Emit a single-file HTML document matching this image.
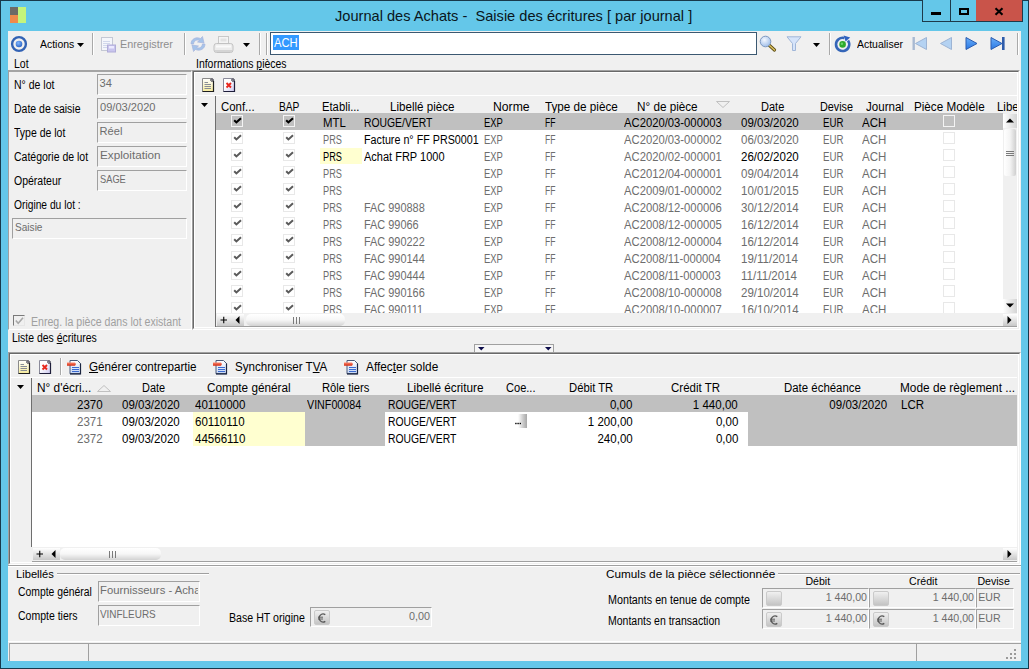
<!DOCTYPE html><html><head><meta charset="utf-8"><title>Journal des Achats</title><style>
*{margin:0;padding:0;box-sizing:border-box}
html,body{width:1029px;height:669px;overflow:hidden}
body{position:relative;background:#64c7e9;font-family:"Liberation Sans",sans-serif}
body>div{position:absolute}
.t{position:absolute;white-space:nowrap;line-height:1.15;font-family:"Liberation Sans",sans-serif}
svg{position:absolute;overflow:visible}
</style></head><body>
<div style="left:0px;top:0px;width:1029px;height:669px;border:1px solid #17394b;background:transparent"></div>
<div style="left:10px;top:7px;width:8px;height:8px;background:#6e6a66"></div>
<div style="left:10px;top:15px;width:8px;height:8px;background:#f08a4b"></div>
<div style="left:18px;top:7px;width:8px;height:16px;background:#c4f47c"></div>
<div class="t" style="left:335.2px;top:8.00px;font-size:14.6px;color:#0a1620;;transform:scaleX(1.0009);transform-origin:left center">Journal des Achats -&nbsp; Saisie des écritures [ par journal ]</div>
<div style="left:922px;top:0px;width:29px;height:22px;border:1px solid #1d3a4a;border-top:none;background:#64c7e9"></div>
<div style="left:950px;top:0px;width:27px;height:22px;border:1px solid #1d3a4a;border-top:none;border-left:none;background:#64c7e9"></div>
<div style="left:950px;top:0px;width:1px;height:22px;background:#1d3a4a"></div>
<div style="left:976px;top:0px;width:47px;height:22px;border:1px solid #1d3a4a;border-top:none;border-left:none;background:#c9544a"></div>
<div style="left:931px;top:12px;width:10px;height:3px;background:#000"></div>
<div style="left:959px;top:8px;width:10px;height:7px;border:2px solid #000"></div>
<svg style="left:994px;top:7px" width="10" height="9" viewBox="0 0 10 9"><path d="M1.5 1.2 L8.5 7.8 M8.5 1.2 L1.5 7.8" stroke="#000" stroke-width="2.1"/></svg>
<div style="left:8px;top:31px;width:1013px;height:630px;background:#f0f0f0"></div>
<svg style="left:10px;top:35px" width="18" height="18" viewBox="0 0 18 18"><defs><radialGradient id="cg" cx="40%" cy="35%" r="70%"><stop offset="0" stop-color="#7fb6ff"/><stop offset="1" stop-color="#2a62c4"/></radialGradient></defs><circle cx="9" cy="9" r="6.9" fill="none" stroke="#3262b4" stroke-width="2.4"/><circle cx="9" cy="9" r="3.3" fill="url(#cg)"/></svg>
<div class="t" style="left:39.7px;top:38.00px;font-size:11.2px;color:#000;;transform:scaleX(0.9339);transform-origin:left center">Actions</div>
<svg style="left:77px;top:43px" width="7" height="4" viewBox="0 0 7 4"><path d="M0 0 H7 L3.5 4 Z" fill="#000"/></svg>
<div style="left:92px;top:33px;width:1px;height:22px;background:#a9a9a9"></div>
<div style="left:93px;top:33px;width:1px;height:22px;background:#ffffff"></div>
<svg style="left:100px;top:36px" width="17" height="17" viewBox="0 0 17 17"><rect x="1.5" y="1.5" width="11" height="13" fill="#f4f6fb" stroke="#c4c8d4"/><path d="M3 5.5h7M3 7.5h7M3 9.5h7M3 11.5h7" stroke="#c8d0e8" stroke-width="0.8"/><rect x="7.5" y="9" width="8" height="7" fill="#c9c5ee" stroke="#b0acd8"/><rect x="9" y="10" width="5" height="2.5" fill="#eceaff"/></svg>
<div class="t" style="left:120px;top:38.00px;font-size:11.2px;color:#8e8e8e;;transform:scaleX(0.9675);transform-origin:left center">Enregistrer</div>
<div style="left:184px;top:33px;width:1px;height:22px;background:#a9a9a9"></div>
<div style="left:185px;top:33px;width:1px;height:22px;background:#ffffff"></div>
<svg style="left:188px;top:35px" width="20" height="18" viewBox="0 0 20 18"><path d="M3 9 C3 4 8 1.5 12.5 3.5 L14.5 1.5 L16 8 L9.5 7 L11.5 5.5 C8.5 4.2 5.8 6 5.5 9 Z" fill="#a6c4ea" stroke="#a8b4dc" stroke-width="0.7"/><path d="M17 9 C17 14 12 16.5 7.5 14.5 L5.5 16.5 L4 10 L10.5 11 L8.5 12.5 C11.5 13.8 14.2 12 14.5 9 Z" fill="#a6c4ea" stroke="#a8b4dc" stroke-width="0.7"/></svg>
<svg style="left:213px;top:35px" width="22" height="19" viewBox="0 0 22 19"><rect x="5.5" y="1.5" width="10" height="8" fill="#f4f4f4" stroke="#c8c8c8"/><rect x="7.5" y="3.5" width="6" height="3" fill="#e2e2e2"/><rect x="1" y="8.5" width="19" height="9" rx="2.5" fill="#ececec" stroke="#c2c2c2"/><rect x="3" y="10.5" width="15" height="2" fill="#fafafa"/><rect x="2" y="15" width="17" height="2" fill="#d4d4d4"/></svg>
<svg style="left:243px;top:43px" width="7" height="4" viewBox="0 0 7 4"><path d="M0 0 H7 L3.5 4 Z" fill="#000"/></svg>
<div style="left:259px;top:33px;width:1px;height:22px;background:#a9a9a9"></div>
<div style="left:260px;top:33px;width:1px;height:22px;background:#ffffff"></div>
<div style="left:266px;top:33px;width:1px;height:22px;background:#a9a9a9"></div>
<div style="left:267px;top:33px;width:1px;height:22px;background:#ffffff"></div>
<div style="left:270px;top:32px;width:487px;height:23px;background:#fff;border:1px solid #3b5871"></div>
<div style="left:273px;top:35px;width:26px;height:15px;background:#3399ff"></div>
<div class="t" style="left:273.6px;top:37.00px;font-size:12px;color:#fff;;transform:scaleX(0.9354);transform-origin:left center">ACH</div>
<svg style="left:759px;top:35px" width="18" height="17" viewBox="0 0 18 17"><defs><radialGradient id="mg" cx="40%" cy="35%" r="60%"><stop offset="0" stop-color="#f4f8ff"/><stop offset="1" stop-color="#a8c4ec"/></radialGradient></defs><path d="M10 10 L15.5 15" stroke="#5a4a10" stroke-width="3.2" stroke-linecap="round"/><path d="M10 10 L15.5 15" stroke="#d9c060" stroke-width="1.6" stroke-linecap="round"/><circle cx="6.5" cy="6.5" r="5.3" fill="url(#mg)" stroke="#7d98c0" stroke-width="1"/></svg>
<svg style="left:786px;top:36px" width="16" height="16" viewBox="0 0 16 16"><path d="M1 0.8 H15 L9.5 7.5 V14.5 H6.5 V7.5 Z" fill="#d6e4fa" stroke="#a0b6d8" stroke-width="1"/></svg>
<svg style="left:813px;top:43px" width="7" height="4" viewBox="0 0 7 4"><path d="M0 0 H7 L3.5 4 Z" fill="#000"/></svg>
<div style="left:829px;top:33px;width:1px;height:22px;background:#a9a9a9"></div>
<div style="left:830px;top:33px;width:1px;height:22px;background:#ffffff"></div>
<svg style="left:834px;top:35px" width="18" height="18" viewBox="0 0 18 18"><path d="M10.31 3.03 A6.6 6.6 0 1 0 14.01 5.61" fill="none" stroke="#3566b8" stroke-width="2.6"/><path d="M9.6 0.6 L16.2 2.4 L11.6 6.6 Z" fill="#2f62c0"/><circle cx="8.6" cy="9.4" r="3.3" fill="#2faa2a"/><circle cx="7.9" cy="8.7" r="1.2" fill="#6ad46a"/></svg>
<div class="t" style="left:857px;top:38.00px;font-size:11.2px;color:#000;;transform:scaleX(0.9354);transform-origin:left center">Actualiser</div>
<svg style="left:912px;top:37px" width="16" height="14" viewBox="0 0 16 14"><rect x="0.5" y="0" width="2.4" height="13" fill="#a9bad2"/><path d="M14.5 0.5 V12.5 L3.5 6.5 Z" fill="#b4d2f2" stroke="#9db4d4" stroke-width="1"/></svg>
<svg style="left:939px;top:37px" width="14" height="14" viewBox="0 0 14 14"><path d="M12.5 0.5 V12.5 L1.5 6.5 Z" fill="#b4d2f2" stroke="#9db4d4" stroke-width="1"/></svg>
<svg style="left:965px;top:37px" width="14" height="14" viewBox="0 0 14 14"><defs><linearGradient id="bg1" x1="0" y1="0" x2="0" y2="1"><stop offset="0" stop-color="#6aaef8"/><stop offset="1" stop-color="#2a78e4"/></linearGradient></defs><path d="M1 0.5 V12.5 L12 6.5 Z" fill="url(#bg1)" stroke="#2a5cb0" stroke-width="1"/></svg>
<svg style="left:990px;top:37px" width="16" height="14" viewBox="0 0 16 14"><path d="M1 0.5 V12.5 L12 6.5 Z" fill="url(#bg1)" stroke="#2a5cb0" stroke-width="1"/><rect x="12" y="0" width="2.6" height="13" fill="#2f5caa"/></svg>
<div style="left:1017px;top:33px;width:1px;height:22px;background:#a9a9a9"></div>
<div style="left:1018px;top:33px;width:1px;height:22px;background:#ffffff"></div>
<div class="t" style="left:14.3px;top:58.00px;font-size:12px;color:#000;;transform:scaleX(0.8750);transform-origin:left center">Lot</div>
<div style="left:8px;top:70px;width:184px;height:260px;border-top:2px solid #a4a4a4;border-left:1px solid #a0a0a0;border-bottom:1px solid #fff;border-right:1px solid #fff;background:#f0f0f0"></div>
<div class="t" style="left:13.9px;top:79.00px;font-size:12px;color:#000;;transform:scaleX(0.8750);transform-origin:left center">N° de lot</div>
<div style="left:97px;top:74px;width:90px;height:21px;border-top:1px solid #a0a0a0;border-left:1px solid #a0a0a0;border-bottom:1px solid #fff;border-right:1px solid #fff"></div>
<div class="t" style="left:99.6px;top:77.00px;font-size:11.1px;color:#6d6d6d;">34</div>
<div class="t" style="left:13.9px;top:103.00px;font-size:12px;color:#000;;transform:scaleX(0.8750);transform-origin:left center">Date de saisie</div>
<div style="left:97px;top:98px;width:90px;height:21px;border-top:1px solid #a0a0a0;border-left:1px solid #a0a0a0;border-bottom:1px solid #fff;border-right:1px solid #fff"></div>
<div class="t" style="left:99.6px;top:101.00px;font-size:11.1px;color:#6d6d6d;;transform:scaleX(0.9990);transform-origin:left center">09/03/2020</div>
<div class="t" style="left:13.9px;top:127.00px;font-size:12px;color:#000;;transform:scaleX(0.8750);transform-origin:left center">Type de lot</div>
<div style="left:97px;top:122px;width:90px;height:21px;border-top:1px solid #a0a0a0;border-left:1px solid #a0a0a0;border-bottom:1px solid #fff;border-right:1px solid #fff"></div>
<div class="t" style="left:99.6px;top:125.00px;font-size:11.1px;color:#6d6d6d;">Réel</div>
<div class="t" style="left:13.9px;top:151.00px;font-size:12px;color:#000;;transform:scaleX(0.8750);transform-origin:left center">Catégorie de lot</div>
<div style="left:97px;top:146px;width:90px;height:21px;border-top:1px solid #a0a0a0;border-left:1px solid #a0a0a0;border-bottom:1px solid #fff;border-right:1px solid #fff"></div>
<div class="t" style="left:99.6px;top:149.00px;font-size:11.1px;color:#6d6d6d;;transform:scaleX(1.0560);transform-origin:left center">Exploitation</div>
<div class="t" style="left:13.9px;top:175.00px;font-size:12px;color:#000;;transform:scaleX(0.8750);transform-origin:left center">Opérateur</div>
<div style="left:97px;top:170px;width:90px;height:21px;border-top:1px solid #a0a0a0;border-left:1px solid #a0a0a0;border-bottom:1px solid #fff;border-right:1px solid #fff"></div>
<div class="t" style="left:99.6px;top:173.00px;font-size:11.1px;color:#6d6d6d;;transform:scaleX(0.8364);transform-origin:left center">SAGE</div>
<div class="t" style="left:13.7px;top:199.00px;font-size:12px;color:#000;;transform:scaleX(0.8547);transform-origin:left center">Origine du lot :</div>
<div style="left:12px;top:218px;width:175px;height:21px;border-top:1px solid #a0a0a0;border-left:1px solid #a0a0a0;border-bottom:1px solid #fff;border-right:1px solid #fff"></div>
<div class="t" style="left:14.8px;top:221.00px;font-size:11.1px;color:#6d6d6d;;transform:scaleX(0.9096);transform-origin:left center">Saisie</div>
<div style="left:13px;top:315px;width:12px;height:11px;border-top:1px solid #7a7a7a;border-left:1px solid #7a7a7a;border-bottom:1px solid #e6e6e6;border-right:1px solid #e6e6e6"></div>
<svg style="left:15px;top:317px" width="9" height="8" viewBox="0 0 9 8"><path d="M0.8 3.5 L3.2 6.2 L8 0.8" fill="none" stroke="#a8a8a8" stroke-width="1.6"/></svg>
<div class="t" style="left:30.6px;top:316.00px;font-size:12px;color:#a0a0a0;;transform:scaleX(0.8818);transform-origin:left center">Enreg. la pièce dans lot existant</div>
<div class="t" style="left:195.6px;top:58.00px;font-size:12px;color:#000;;transform:scaleX(0.8697);transform-origin:left center">Informations <u>p</u>ièces</div>
<div style="left:192px;top:70px;width:828px;height:260px;border-top:1px solid #a0a0a0;border-left:1px solid #a0a0a0;border-right:1px solid #fff;border-bottom:1px solid #fff"></div>
<div style="left:193px;top:71px;width:826px;height:258px;border-top:1px solid #696969;border-left:1px solid #696969;border-right:1px solid #f0f0f0;border-bottom:1px solid #f0f0f0"></div>
<div style="left:194px;top:72px;width:824px;height:256px;border:1px solid #fff;background:#f0f0f0"></div>
<svg style="left:202px;top:78px" width="12" height="14" viewBox="0 0 12 14"><defs><linearGradient id="dn" x1="0" y1="0" x2="0" y2="1"><stop offset="0" stop-color="#ffffff"/><stop offset="1" stop-color="#f7ec9c"/></linearGradient></defs><path d="M0.5 0.5 H9 L11.5 3 V13.5 H0.5 Z" fill="url(#dn)" stroke="#8a8a8a" stroke-width="1"/><path d="M11.5 3 V13.5 H0.5" fill="none" stroke="#1e1e1e" stroke-width="1.2"/><circle cx="10" cy="2" r="1.3" fill="none" stroke="#2a2a3a" stroke-width="0.9"/><path d="M2.5 4.5 H6 M2.5 6.5 H9 M2.5 8.5 H9 M2.5 10.5 H9" stroke="#7a8090" stroke-width="0.9"/></svg>
<svg style="left:223px;top:78px" width="12" height="14" viewBox="0 0 12 14"><defs><linearGradient id="dd" x1="0" y1="0" x2="1" y2="1"><stop offset="0.4" stop-color="#ffffff"/><stop offset="1" stop-color="#c8c4ee"/></linearGradient></defs><path d="M0.5 0.5 H9 L11.5 3 V13.5 H0.5 Z" fill="url(#dd)" stroke="#8a8a9a" stroke-width="1"/><path d="M11.5 3 V13.5 H0.5" fill="none" stroke="#1e1e3a" stroke-width="1.2"/><circle cx="10" cy="2" r="1.3" fill="none" stroke="#2a2a3a" stroke-width="0.9"/><path d="M3.5 5 L8 9.5 M8 5 L3.5 9.5" stroke="#e8281e" stroke-width="1.9"/></svg>
<div style="left:195px;top:95px;width:822px;height:1px;background:#fff"></div>
<div style="left:215px;top:96px;width:1px;height:231px;background:#6e6e6e"></div>
<svg style="left:201px;top:103px" width="7" height="4" viewBox="0 0 7 4"><path d="M0 0 H7 L3.5 4 Z" fill="#000"/></svg>
<div class="t" style="left:220.7px;top:101.00px;font-size:12px;color:#000;;transform:scaleX(0.9505);transform-origin:left center">Conf...</div>
<div class="t" style="left:278.6px;top:101.00px;font-size:12px;color:#000;;transform:scaleX(0.8495);transform-origin:left center">BAP</div>
<div class="t" style="left:322.3px;top:101.00px;font-size:12px;color:#000;;transform:scaleX(0.9370);transform-origin:left center">Etabli...</div>
<div class="t" style="left:389.6px;top:101.00px;font-size:12px;color:#000;;transform:scaleX(0.9668);transform-origin:left center">Libellé pièce</div>
<div class="t" style="left:493.4px;top:101.00px;font-size:12px;color:#000;;transform:scaleX(1.0165);transform-origin:left center">Norme</div>
<div class="t" style="left:544.9px;top:101.00px;font-size:12px;color:#000;;transform:scaleX(0.9743);transform-origin:left center">Type de pièce</div>
<div class="t" style="left:637.2px;top:101.00px;font-size:12px;color:#000;;transform:scaleX(0.9748);transform-origin:left center">N° de pièce</div>
<div class="t" style="left:760.7px;top:101.00px;font-size:12px;color:#000;;transform:scaleX(0.9192);transform-origin:left center">Date</div>
<div class="t" style="left:819.8px;top:101.00px;font-size:12px;color:#000;;transform:scaleX(0.8997);transform-origin:left center">Devise</div>
<div class="t" style="left:865.7px;top:101.00px;font-size:12px;color:#000;;transform:scaleX(0.9629);transform-origin:left center">Journal</div>
<div class="t" style="left:914.3px;top:101.00px;font-size:12px;color:#000;;transform:scaleX(0.9723);transform-origin:left center">Pièce Modèle</div>
<div style="left:990px;top:96px;width:27px;height:17px;overflow:hidden"><div class="t" style="left:6.6px;top:5px;font-size:12px;color:#000;transform:scaleX(0.955);transform-origin:left center">Libellé</div></div>
<svg style="left:716px;top:101px" width="14" height="7" viewBox="0 0 14 7"><path d="M0.5 0.5 H13.5 L7 6.5 Z" fill="none" stroke="#c0c0c0" stroke-width="1"/></svg>
<div style="left:216px;top:113px;width:787px;height:200px;background:#fff;overflow:hidden"></div>
<div style="left:216px;top:113px;width:787px;height:200px;overflow:hidden;background:#fff"><div style="position:absolute;left:0px;top:0px;width:787px;height:17px;background:#c0c0c0"></div><div style="position:absolute;left:15px;top:2px;width:12px;height:12px;border:1px solid #f4f4f4;background:#c0c0c0"></div><svg style="left:17px;top:4px" width="9" height="7"><path d="M1.2 3.3 L3.4 5.4 L8 1.3" fill="none" stroke="#000" stroke-width="2.1"/></svg><div style="position:absolute;left:67px;top:2px;width:12px;height:12px;border:1px solid #f4f4f4;background:#c0c0c0"></div><svg style="left:69px;top:4px" width="9" height="7"><path d="M1.2 3.3 L3.4 5.4 L8 1.3" fill="none" stroke="#000" stroke-width="2.1"/></svg><div style="position:absolute;left:727px;top:2px;width:12px;height:12px;border:1px solid #f4f4f4"></div><div class="t" style="left:107.30000000000001px;top:4.00px;font-size:12px;color:#000;transform:scaleX(0.9500);transform-origin:left center">MTL</div><div class="t" style="left:148.3px;top:4.00px;font-size:12px;color:#000;transform:scaleX(0.8644);transform-origin:left center">ROUGE/VERT</div><div class="t" style="left:268.3px;top:4.00px;font-size:12px;color:#000;transform:scaleX(0.7871);transform-origin:left center">EXP</div><div class="t" style="left:328.5px;top:4.00px;font-size:12px;color:#000;transform:scaleX(0.7162);transform-origin:left center">FF</div><div class="t" style="left:408px;top:4.00px;font-size:12px;color:#000;transform:scaleX(0.9386);transform-origin:left center">AC2020/03-000003</div><div class="t" style="left:525.3px;top:4.00px;font-size:12px;color:#000;transform:scaleX(0.9607);transform-origin:left center">09/03/2020</div><div class="t" style="left:607.3px;top:4.00px;font-size:12px;color:#000;transform:scaleX(0.8052);transform-origin:left center">EUR</div><div class="t" style="left:646.2px;top:4.00px;font-size:12px;color:#000;transform:scaleX(0.9591);transform-origin:left center">ACH</div><div style="position:absolute;left:15px;top:19px;width:12px;height:12px;border:1px solid #e8e8e8"></div><svg style="left:17px;top:21px" width="9" height="7"><path d="M1.2 3.3 L3.4 5.4 L8 1.3" fill="none" stroke="#5a5a5a" stroke-width="2"/></svg><div style="position:absolute;left:67px;top:19px;width:12px;height:12px;border:1px solid #e8e8e8"></div><svg style="left:69px;top:21px" width="9" height="7"><path d="M1.2 3.3 L3.4 5.4 L8 1.3" fill="none" stroke="#5a5a5a" stroke-width="2"/></svg><div style="position:absolute;left:727px;top:19px;width:12px;height:12px;border:1px solid #e8e8e8"></div><div class="t" style="left:107.30000000000001px;top:21.00px;font-size:12px;color:#6d6d6d;transform:scaleX(0.7660);transform-origin:left center">PRS</div><div class="t" style="left:148.3px;top:21.00px;font-size:12px;color:#000;transform:scaleX(0.8948);transform-origin:left center">Facture n° FF PRS0001</div><div class="t" style="left:268.3px;top:21.00px;font-size:12px;color:#6d6d6d;transform:scaleX(0.7871);transform-origin:left center">EXP</div><div class="t" style="left:328.5px;top:21.00px;font-size:12px;color:#6d6d6d;transform:scaleX(0.7162);transform-origin:left center">FF</div><div class="t" style="left:408px;top:21.00px;font-size:12px;color:#6d6d6d;transform:scaleX(0.9386);transform-origin:left center">AC2020/03-000002</div><div class="t" style="left:525.3px;top:21.00px;font-size:12px;color:#6d6d6d;transform:scaleX(0.9607);transform-origin:left center">06/03/2020</div><div class="t" style="left:607.3px;top:21.00px;font-size:12px;color:#6d6d6d;transform:scaleX(0.8052);transform-origin:left center">EUR</div><div class="t" style="left:646.2px;top:21.00px;font-size:12px;color:#6d6d6d;transform:scaleX(0.9591);transform-origin:left center">ACH</div><div style="position:absolute;left:104px;top:35px;width:42px;height:16px;background:#ffffd0"></div><div style="position:absolute;left:15px;top:36px;width:12px;height:12px;border:1px solid #e8e8e8"></div><svg style="left:17px;top:38px" width="9" height="7"><path d="M1.2 3.3 L3.4 5.4 L8 1.3" fill="none" stroke="#5a5a5a" stroke-width="2"/></svg><div style="position:absolute;left:67px;top:36px;width:12px;height:12px;border:1px solid #e8e8e8"></div><svg style="left:69px;top:38px" width="9" height="7"><path d="M1.2 3.3 L3.4 5.4 L8 1.3" fill="none" stroke="#5a5a5a" stroke-width="2"/></svg><div style="position:absolute;left:727px;top:36px;width:12px;height:12px;border:1px solid #e8e8e8"></div><div class="t" style="left:107.30000000000001px;top:38.00px;font-size:12px;color:#000;transform:scaleX(0.7660);transform-origin:left center">PRS</div><div class="t" style="left:148.3px;top:38.00px;font-size:12px;color:#000;transform:scaleX(0.9165);transform-origin:left center">Achat FRP 1000</div><div class="t" style="left:268.3px;top:38.00px;font-size:12px;color:#6d6d6d;transform:scaleX(0.7871);transform-origin:left center">EXP</div><div class="t" style="left:328.5px;top:38.00px;font-size:12px;color:#6d6d6d;transform:scaleX(0.7162);transform-origin:left center">FF</div><div class="t" style="left:408px;top:38.00px;font-size:12px;color:#6d6d6d;transform:scaleX(0.9386);transform-origin:left center">AC2020/02-000001</div><div class="t" style="left:525.3px;top:38.00px;font-size:12px;color:#000;transform:scaleX(0.9607);transform-origin:left center">26/02/2020</div><div class="t" style="left:607.3px;top:38.00px;font-size:12px;color:#6d6d6d;transform:scaleX(0.8052);transform-origin:left center">EUR</div><div class="t" style="left:646.2px;top:38.00px;font-size:12px;color:#6d6d6d;transform:scaleX(0.9591);transform-origin:left center">ACH</div><div style="position:absolute;left:15px;top:53px;width:12px;height:12px;border:1px solid #e8e8e8"></div><svg style="left:17px;top:55px" width="9" height="7"><path d="M1.2 3.3 L3.4 5.4 L8 1.3" fill="none" stroke="#5a5a5a" stroke-width="2"/></svg><div style="position:absolute;left:67px;top:53px;width:12px;height:12px;border:1px solid #e8e8e8"></div><svg style="left:69px;top:55px" width="9" height="7"><path d="M1.2 3.3 L3.4 5.4 L8 1.3" fill="none" stroke="#5a5a5a" stroke-width="2"/></svg><div style="position:absolute;left:727px;top:53px;width:12px;height:12px;border:1px solid #e8e8e8"></div><div class="t" style="left:107.30000000000001px;top:55.00px;font-size:12px;color:#6d6d6d;transform:scaleX(0.7660);transform-origin:left center">PRS</div><div class="t" style="left:268.3px;top:55.00px;font-size:12px;color:#6d6d6d;transform:scaleX(0.7871);transform-origin:left center">EXP</div><div class="t" style="left:328.5px;top:55.00px;font-size:12px;color:#6d6d6d;transform:scaleX(0.7162);transform-origin:left center">FF</div><div class="t" style="left:408px;top:55.00px;font-size:12px;color:#6d6d6d;transform:scaleX(0.9386);transform-origin:left center">AC2012/04-000001</div><div class="t" style="left:525.3px;top:55.00px;font-size:12px;color:#6d6d6d;transform:scaleX(0.9607);transform-origin:left center">09/04/2014</div><div class="t" style="left:607.3px;top:55.00px;font-size:12px;color:#6d6d6d;transform:scaleX(0.8052);transform-origin:left center">EUR</div><div class="t" style="left:646.2px;top:55.00px;font-size:12px;color:#6d6d6d;transform:scaleX(0.9591);transform-origin:left center">ACH</div><div style="position:absolute;left:15px;top:70px;width:12px;height:12px;border:1px solid #e8e8e8"></div><svg style="left:17px;top:72px" width="9" height="7"><path d="M1.2 3.3 L3.4 5.4 L8 1.3" fill="none" stroke="#5a5a5a" stroke-width="2"/></svg><div style="position:absolute;left:67px;top:70px;width:12px;height:12px;border:1px solid #e8e8e8"></div><svg style="left:69px;top:72px" width="9" height="7"><path d="M1.2 3.3 L3.4 5.4 L8 1.3" fill="none" stroke="#5a5a5a" stroke-width="2"/></svg><div style="position:absolute;left:727px;top:70px;width:12px;height:12px;border:1px solid #e8e8e8"></div><div class="t" style="left:107.30000000000001px;top:72.00px;font-size:12px;color:#6d6d6d;transform:scaleX(0.7660);transform-origin:left center">PRS</div><div class="t" style="left:268.3px;top:72.00px;font-size:12px;color:#6d6d6d;transform:scaleX(0.7871);transform-origin:left center">EXP</div><div class="t" style="left:328.5px;top:72.00px;font-size:12px;color:#6d6d6d;transform:scaleX(0.7162);transform-origin:left center">FF</div><div class="t" style="left:408px;top:72.00px;font-size:12px;color:#6d6d6d;transform:scaleX(0.9386);transform-origin:left center">AC2009/01-000002</div><div class="t" style="left:525.3px;top:72.00px;font-size:12px;color:#6d6d6d;transform:scaleX(0.9607);transform-origin:left center">10/01/2015</div><div class="t" style="left:607.3px;top:72.00px;font-size:12px;color:#6d6d6d;transform:scaleX(0.8052);transform-origin:left center">EUR</div><div class="t" style="left:646.2px;top:72.00px;font-size:12px;color:#6d6d6d;transform:scaleX(0.9591);transform-origin:left center">ACH</div><div style="position:absolute;left:15px;top:87px;width:12px;height:12px;border:1px solid #e8e8e8"></div><svg style="left:17px;top:89px" width="9" height="7"><path d="M1.2 3.3 L3.4 5.4 L8 1.3" fill="none" stroke="#5a5a5a" stroke-width="2"/></svg><div style="position:absolute;left:67px;top:87px;width:12px;height:12px;border:1px solid #e8e8e8"></div><svg style="left:69px;top:89px" width="9" height="7"><path d="M1.2 3.3 L3.4 5.4 L8 1.3" fill="none" stroke="#5a5a5a" stroke-width="2"/></svg><div style="position:absolute;left:727px;top:87px;width:12px;height:12px;border:1px solid #e8e8e8"></div><div class="t" style="left:107.30000000000001px;top:89.00px;font-size:12px;color:#6d6d6d;transform:scaleX(0.7660);transform-origin:left center">PRS</div><div class="t" style="left:148.3px;top:89.00px;font-size:12px;color:#6d6d6d;transform:scaleX(0.9100);transform-origin:left center">FAC 990888</div><div class="t" style="left:268.3px;top:89.00px;font-size:12px;color:#6d6d6d;transform:scaleX(0.7871);transform-origin:left center">EXP</div><div class="t" style="left:328.5px;top:89.00px;font-size:12px;color:#6d6d6d;transform:scaleX(0.7162);transform-origin:left center">FF</div><div class="t" style="left:408px;top:89.00px;font-size:12px;color:#6d6d6d;transform:scaleX(0.9386);transform-origin:left center">AC2008/12-000006</div><div class="t" style="left:525.3px;top:89.00px;font-size:12px;color:#6d6d6d;transform:scaleX(0.9607);transform-origin:left center">30/12/2014</div><div class="t" style="left:607.3px;top:89.00px;font-size:12px;color:#6d6d6d;transform:scaleX(0.8052);transform-origin:left center">EUR</div><div class="t" style="left:646.2px;top:89.00px;font-size:12px;color:#6d6d6d;transform:scaleX(0.9591);transform-origin:left center">ACH</div><div style="position:absolute;left:15px;top:104px;width:12px;height:12px;border:1px solid #e8e8e8"></div><svg style="left:17px;top:106px" width="9" height="7"><path d="M1.2 3.3 L3.4 5.4 L8 1.3" fill="none" stroke="#5a5a5a" stroke-width="2"/></svg><div style="position:absolute;left:67px;top:104px;width:12px;height:12px;border:1px solid #e8e8e8"></div><svg style="left:69px;top:106px" width="9" height="7"><path d="M1.2 3.3 L3.4 5.4 L8 1.3" fill="none" stroke="#5a5a5a" stroke-width="2"/></svg><div style="position:absolute;left:727px;top:104px;width:12px;height:12px;border:1px solid #e8e8e8"></div><div class="t" style="left:107.30000000000001px;top:106.00px;font-size:12px;color:#6d6d6d;transform:scaleX(0.7660);transform-origin:left center">PRS</div><div class="t" style="left:148.3px;top:106.00px;font-size:12px;color:#6d6d6d;transform:scaleX(0.9100);transform-origin:left center">FAC 99066</div><div class="t" style="left:268.3px;top:106.00px;font-size:12px;color:#6d6d6d;transform:scaleX(0.7871);transform-origin:left center">EXP</div><div class="t" style="left:328.5px;top:106.00px;font-size:12px;color:#6d6d6d;transform:scaleX(0.7162);transform-origin:left center">FF</div><div class="t" style="left:408px;top:106.00px;font-size:12px;color:#6d6d6d;transform:scaleX(0.9386);transform-origin:left center">AC2008/12-000005</div><div class="t" style="left:525.3px;top:106.00px;font-size:12px;color:#6d6d6d;transform:scaleX(0.9607);transform-origin:left center">16/12/2014</div><div class="t" style="left:607.3px;top:106.00px;font-size:12px;color:#6d6d6d;transform:scaleX(0.8052);transform-origin:left center">EUR</div><div class="t" style="left:646.2px;top:106.00px;font-size:12px;color:#6d6d6d;transform:scaleX(0.9591);transform-origin:left center">ACH</div><div style="position:absolute;left:15px;top:121px;width:12px;height:12px;border:1px solid #e8e8e8"></div><svg style="left:17px;top:123px" width="9" height="7"><path d="M1.2 3.3 L3.4 5.4 L8 1.3" fill="none" stroke="#5a5a5a" stroke-width="2"/></svg><div style="position:absolute;left:67px;top:121px;width:12px;height:12px;border:1px solid #e8e8e8"></div><svg style="left:69px;top:123px" width="9" height="7"><path d="M1.2 3.3 L3.4 5.4 L8 1.3" fill="none" stroke="#5a5a5a" stroke-width="2"/></svg><div style="position:absolute;left:727px;top:121px;width:12px;height:12px;border:1px solid #e8e8e8"></div><div class="t" style="left:107.30000000000001px;top:123.00px;font-size:12px;color:#6d6d6d;transform:scaleX(0.7660);transform-origin:left center">PRS</div><div class="t" style="left:148.3px;top:123.00px;font-size:12px;color:#6d6d6d;transform:scaleX(0.9100);transform-origin:left center">FAC 990222</div><div class="t" style="left:268.3px;top:123.00px;font-size:12px;color:#6d6d6d;transform:scaleX(0.7871);transform-origin:left center">EXP</div><div class="t" style="left:328.5px;top:123.00px;font-size:12px;color:#6d6d6d;transform:scaleX(0.7162);transform-origin:left center">FF</div><div class="t" style="left:408px;top:123.00px;font-size:12px;color:#6d6d6d;transform:scaleX(0.9386);transform-origin:left center">AC2008/12-000004</div><div class="t" style="left:525.3px;top:123.00px;font-size:12px;color:#6d6d6d;transform:scaleX(0.9607);transform-origin:left center">16/12/2014</div><div class="t" style="left:607.3px;top:123.00px;font-size:12px;color:#6d6d6d;transform:scaleX(0.8052);transform-origin:left center">EUR</div><div class="t" style="left:646.2px;top:123.00px;font-size:12px;color:#6d6d6d;transform:scaleX(0.9591);transform-origin:left center">ACH</div><div style="position:absolute;left:15px;top:138px;width:12px;height:12px;border:1px solid #e8e8e8"></div><svg style="left:17px;top:140px" width="9" height="7"><path d="M1.2 3.3 L3.4 5.4 L8 1.3" fill="none" stroke="#5a5a5a" stroke-width="2"/></svg><div style="position:absolute;left:67px;top:138px;width:12px;height:12px;border:1px solid #e8e8e8"></div><svg style="left:69px;top:140px" width="9" height="7"><path d="M1.2 3.3 L3.4 5.4 L8 1.3" fill="none" stroke="#5a5a5a" stroke-width="2"/></svg><div style="position:absolute;left:727px;top:138px;width:12px;height:12px;border:1px solid #e8e8e8"></div><div class="t" style="left:107.30000000000001px;top:140.00px;font-size:12px;color:#6d6d6d;transform:scaleX(0.7660);transform-origin:left center">PRS</div><div class="t" style="left:148.3px;top:140.00px;font-size:12px;color:#6d6d6d;transform:scaleX(0.9100);transform-origin:left center">FAC 990144</div><div class="t" style="left:268.3px;top:140.00px;font-size:12px;color:#6d6d6d;transform:scaleX(0.7871);transform-origin:left center">EXP</div><div class="t" style="left:328.5px;top:140.00px;font-size:12px;color:#6d6d6d;transform:scaleX(0.7162);transform-origin:left center">FF</div><div class="t" style="left:408px;top:140.00px;font-size:12px;color:#6d6d6d;transform:scaleX(0.9386);transform-origin:left center">AC2008/11-000004</div><div class="t" style="left:525.3px;top:140.00px;font-size:12px;color:#6d6d6d;transform:scaleX(0.9607);transform-origin:left center">19/11/2014</div><div class="t" style="left:607.3px;top:140.00px;font-size:12px;color:#6d6d6d;transform:scaleX(0.8052);transform-origin:left center">EUR</div><div class="t" style="left:646.2px;top:140.00px;font-size:12px;color:#6d6d6d;transform:scaleX(0.9591);transform-origin:left center">ACH</div><div style="position:absolute;left:15px;top:155px;width:12px;height:12px;border:1px solid #e8e8e8"></div><svg style="left:17px;top:157px" width="9" height="7"><path d="M1.2 3.3 L3.4 5.4 L8 1.3" fill="none" stroke="#5a5a5a" stroke-width="2"/></svg><div style="position:absolute;left:67px;top:155px;width:12px;height:12px;border:1px solid #e8e8e8"></div><svg style="left:69px;top:157px" width="9" height="7"><path d="M1.2 3.3 L3.4 5.4 L8 1.3" fill="none" stroke="#5a5a5a" stroke-width="2"/></svg><div style="position:absolute;left:727px;top:155px;width:12px;height:12px;border:1px solid #e8e8e8"></div><div class="t" style="left:107.30000000000001px;top:157.00px;font-size:12px;color:#6d6d6d;transform:scaleX(0.7660);transform-origin:left center">PRS</div><div class="t" style="left:148.3px;top:157.00px;font-size:12px;color:#6d6d6d;transform:scaleX(0.9100);transform-origin:left center">FAC 990444</div><div class="t" style="left:268.3px;top:157.00px;font-size:12px;color:#6d6d6d;transform:scaleX(0.7871);transform-origin:left center">EXP</div><div class="t" style="left:328.5px;top:157.00px;font-size:12px;color:#6d6d6d;transform:scaleX(0.7162);transform-origin:left center">FF</div><div class="t" style="left:408px;top:157.00px;font-size:12px;color:#6d6d6d;transform:scaleX(0.9386);transform-origin:left center">AC2008/11-000003</div><div class="t" style="left:525.3px;top:157.00px;font-size:12px;color:#6d6d6d;transform:scaleX(0.9607);transform-origin:left center">11/11/2014</div><div class="t" style="left:607.3px;top:157.00px;font-size:12px;color:#6d6d6d;transform:scaleX(0.8052);transform-origin:left center">EUR</div><div class="t" style="left:646.2px;top:157.00px;font-size:12px;color:#6d6d6d;transform:scaleX(0.9591);transform-origin:left center">ACH</div><div style="position:absolute;left:15px;top:172px;width:12px;height:12px;border:1px solid #e8e8e8"></div><svg style="left:17px;top:174px" width="9" height="7"><path d="M1.2 3.3 L3.4 5.4 L8 1.3" fill="none" stroke="#5a5a5a" stroke-width="2"/></svg><div style="position:absolute;left:67px;top:172px;width:12px;height:12px;border:1px solid #e8e8e8"></div><svg style="left:69px;top:174px" width="9" height="7"><path d="M1.2 3.3 L3.4 5.4 L8 1.3" fill="none" stroke="#5a5a5a" stroke-width="2"/></svg><div style="position:absolute;left:727px;top:172px;width:12px;height:12px;border:1px solid #e8e8e8"></div><div class="t" style="left:107.30000000000001px;top:174.00px;font-size:12px;color:#6d6d6d;transform:scaleX(0.7660);transform-origin:left center">PRS</div><div class="t" style="left:148.3px;top:174.00px;font-size:12px;color:#6d6d6d;transform:scaleX(0.9100);transform-origin:left center">FAC 990166</div><div class="t" style="left:268.3px;top:174.00px;font-size:12px;color:#6d6d6d;transform:scaleX(0.7871);transform-origin:left center">EXP</div><div class="t" style="left:328.5px;top:174.00px;font-size:12px;color:#6d6d6d;transform:scaleX(0.7162);transform-origin:left center">FF</div><div class="t" style="left:408px;top:174.00px;font-size:12px;color:#6d6d6d;transform:scaleX(0.9386);transform-origin:left center">AC2008/10-000008</div><div class="t" style="left:525.3px;top:174.00px;font-size:12px;color:#6d6d6d;transform:scaleX(0.9607);transform-origin:left center">29/10/2014</div><div class="t" style="left:607.3px;top:174.00px;font-size:12px;color:#6d6d6d;transform:scaleX(0.8052);transform-origin:left center">EUR</div><div class="t" style="left:646.2px;top:174.00px;font-size:12px;color:#6d6d6d;transform:scaleX(0.9591);transform-origin:left center">ACH</div><div style="position:absolute;left:15px;top:189px;width:12px;height:12px;border:1px solid #e8e8e8"></div><svg style="left:17px;top:191px" width="9" height="7"><path d="M1.2 3.3 L3.4 5.4 L8 1.3" fill="none" stroke="#5a5a5a" stroke-width="2"/></svg><div style="position:absolute;left:67px;top:189px;width:12px;height:12px;border:1px solid #e8e8e8"></div><svg style="left:69px;top:191px" width="9" height="7"><path d="M1.2 3.3 L3.4 5.4 L8 1.3" fill="none" stroke="#5a5a5a" stroke-width="2"/></svg><div style="position:absolute;left:727px;top:189px;width:12px;height:12px;border:1px solid #e8e8e8"></div><div class="t" style="left:107.30000000000001px;top:191.00px;font-size:12px;color:#6d6d6d;transform:scaleX(0.7660);transform-origin:left center">PRS</div><div class="t" style="left:148.3px;top:191.00px;font-size:12px;color:#6d6d6d;transform:scaleX(0.9100);transform-origin:left center">FAC 990111</div><div class="t" style="left:268.3px;top:191.00px;font-size:12px;color:#6d6d6d;transform:scaleX(0.7871);transform-origin:left center">EXP</div><div class="t" style="left:328.5px;top:191.00px;font-size:12px;color:#6d6d6d;transform:scaleX(0.7162);transform-origin:left center">FF</div><div class="t" style="left:408px;top:191.00px;font-size:12px;color:#6d6d6d;transform:scaleX(0.9386);transform-origin:left center">AC2008/10-000007</div><div class="t" style="left:525.3px;top:191.00px;font-size:12px;color:#6d6d6d;transform:scaleX(0.9607);transform-origin:left center">16/10/2014</div><div class="t" style="left:607.3px;top:191.00px;font-size:12px;color:#6d6d6d;transform:scaleX(0.8052);transform-origin:left center">EUR</div><div class="t" style="left:646.2px;top:191.00px;font-size:12px;color:#6d6d6d;transform:scaleX(0.9591);transform-origin:left center">ACH</div></div>
<div style="left:1003px;top:113px;width:14px;height:200px;background:#f0f0f0"></div>
<div style="left:1003px;top:114px;width:14px;height:14px;background:linear-gradient(to right,#ffffff,#d4d4d4)"></div>
<svg style="left:1006px;top:118px" width="8" height="5" viewBox="0 0 8 5"><path d="M0 4.5 L4 0.5 L8 4.5 Z" fill="#000"/></svg>
<div style="left:1004px;top:129px;width:12px;height:47px;background:linear-gradient(to right,#ffffff 0%,#f4f4f4 50%,#cfcfcf 100%);border-radius:2px"></div>
<svg style="left:1006px;top:151px" width="8" height="6" viewBox="0 0 8 6"><path d="M0 0.5 H8 M0 2.5 H8 M0 4.5 H8" stroke="#7a7a7a" stroke-width="1"/></svg>
<div style="left:1003px;top:299px;width:14px;height:14px;background:linear-gradient(to right,#ffffff,#d4d4d4)"></div>
<svg style="left:1006px;top:303px" width="8" height="5" viewBox="0 0 8 5"><path d="M0 0.5 H8 L4 4.5 Z" fill="#000"/></svg>
<div style="left:216px;top:313px;width:801px;height:13px;background:#f0f0f0"></div>
<div style="left:216px;top:326px;width:801px;height:1px;background:#a0a0a0"></div>
<div style="left:217px;top:314px;width:13px;height:12px;background:linear-gradient(to bottom,#ffffff,#c8c8c8)"></div>
<svg style="left:220px;top:316px" width="8" height="8" viewBox="0 0 8 8"><path d="M0.5 4 H7 M3.75 0.8 V7.2" stroke="#000" stroke-width="1.1"/></svg>
<div style="left:230px;top:314px;width:14px;height:12px;background:linear-gradient(to bottom,#ffffff,#c8c8c8)"></div>
<svg style="left:235px;top:316px" width="5" height="8" viewBox="0 0 5 8"><path d="M4.5 0 V8 L0.5 4 Z" fill="#000"/></svg>
<div style="left:246px;top:314px;width:99px;height:12px;background:linear-gradient(to bottom,#ffffff 0%,#f6f6f6 50%,#d2d2d2 100%);border-radius:5px"></div>
<svg style="left:293px;top:317px" width="7" height="7" viewBox="0 0 7 7"><path d="M0.5 0 V7 M3.5 0 V7 M6.5 0 V7" stroke="#7a7a7a" stroke-width="1"/></svg>
<div style="left:1003px;top:314px;width:14px;height:12px;background:linear-gradient(to bottom,#ffffff,#c8c8c8)"></div>
<svg style="left:1007px;top:316px" width="5" height="8" viewBox="0 0 5 8"><path d="M0.5 0 V8 L4.5 4 Z" fill="#000"/></svg>
<div class="t" style="left:11.7px;top:332.00px;font-size:12px;color:#000;;transform:scaleX(0.8698);transform-origin:left center">Liste des <u>é</u>critures</div>
<div style="left:474px;top:344px;width:80px;height:8px;border:1px solid #a0a0a0;border-bottom:none;background:#f6f6f6"></div>
<svg style="left:478px;top:347px" width="7" height="4" viewBox="0 0 7 4"><path d="M0 0 H6.5 L3.25 3.5 Z" fill="#0c0c4a"/></svg>
<svg style="left:545px;top:347px" width="7" height="4" viewBox="0 0 7 4"><path d="M0 0 H6.5 L3.25 3.5 Z" fill="#0c0c4a"/></svg>
<div style="left:8px;top:352px;width:1013px;height:213px;border-top:1px solid #a0a0a0;border-left:1px solid #a0a0a0;border-right:1px solid #fff;border-bottom:1px solid #fff"></div>
<div style="left:9px;top:353px;width:1011px;height:211px;border-top:1px solid #696969;border-left:1px solid #696969;border-right:1px solid #f0f0f0;border-bottom:1px solid #f0f0f0"></div>
<div style="left:10px;top:354px;width:1009px;height:209px;border:1px solid #fff;background:#f0f0f0"></div>
<svg style="left:18px;top:360px" width="12" height="14" viewBox="0 0 12 14"><defs><linearGradient id="dn" x1="0" y1="0" x2="0" y2="1"><stop offset="0" stop-color="#ffffff"/><stop offset="1" stop-color="#f7ec9c"/></linearGradient></defs><path d="M0.5 0.5 H9 L11.5 3 V13.5 H0.5 Z" fill="url(#dn)" stroke="#8a8a8a" stroke-width="1"/><path d="M11.5 3 V13.5 H0.5" fill="none" stroke="#1e1e1e" stroke-width="1.2"/><circle cx="10" cy="2" r="1.3" fill="none" stroke="#2a2a3a" stroke-width="0.9"/><path d="M2.5 4.5 H6 M2.5 6.5 H9 M2.5 8.5 H9 M2.5 10.5 H9" stroke="#7a8090" stroke-width="0.9"/></svg>
<svg style="left:39px;top:360px" width="12" height="14" viewBox="0 0 12 14"><defs><linearGradient id="dd" x1="0" y1="0" x2="1" y2="1"><stop offset="0.4" stop-color="#ffffff"/><stop offset="1" stop-color="#c8c4ee"/></linearGradient></defs><path d="M0.5 0.5 H9 L11.5 3 V13.5 H0.5 Z" fill="url(#dd)" stroke="#8a8a9a" stroke-width="1"/><path d="M11.5 3 V13.5 H0.5" fill="none" stroke="#1e1e3a" stroke-width="1.2"/><circle cx="10" cy="2" r="1.3" fill="none" stroke="#2a2a3a" stroke-width="0.9"/><path d="M3.5 5 L8 9.5 M8 5 L3.5 9.5" stroke="#e8281e" stroke-width="1.9"/></svg>
<div style="left:60px;top:358px;width:1px;height:17px;background:#a9a9a9"></div>
<div style="left:61px;top:358px;width:1px;height:17px;background:#fff"></div>
<svg style="left:67px;top:359.5px" width="15" height="15" viewBox="0 0 15 15"><defs><linearGradient id="gi" x1="0" y1="0" x2="0" y2="1"><stop offset="0" stop-color="#ffffff"/><stop offset="1" stop-color="#c4d4f4"/></linearGradient><linearGradient id="gr" x1="0" y1="0" x2="0" y2="1"><stop offset="0" stop-color="#ff8a70"/><stop offset="1" stop-color="#d02810"/></linearGradient></defs><path d="M3 0.5 H10.5 L13.5 3.5 V13.8 H3 Z" fill="url(#gi)" stroke="#4a5a7a" stroke-width="1"/><path d="M13.5 3.5 V13.8 H3" fill="none" stroke="#1a2440" stroke-width="1.2"/><path d="M5 7.5 H12 M5 9.5 H12 M5 11.5 H12" stroke="#3a6ad0" stroke-width="1"/><path d="M0 2.5 H8 L9 4 L8 5.8 H0 Z" fill="url(#gr)"/></svg>
<div class="t" style="left:89.4px;top:361.00px;font-size:12px;color:#000;;transform:scaleX(0.9717);transform-origin:left center"><u>G</u>énérer contrepartie</div>
<svg style="left:213px;top:359.5px" width="15" height="15" viewBox="0 0 15 15"><defs><linearGradient id="gi" x1="0" y1="0" x2="0" y2="1"><stop offset="0" stop-color="#ffffff"/><stop offset="1" stop-color="#c4d4f4"/></linearGradient><linearGradient id="gr" x1="0" y1="0" x2="0" y2="1"><stop offset="0" stop-color="#ff8a70"/><stop offset="1" stop-color="#d02810"/></linearGradient></defs><path d="M3 0.5 H10.5 L13.5 3.5 V13.8 H3 Z" fill="url(#gi)" stroke="#4a5a7a" stroke-width="1"/><path d="M13.5 3.5 V13.8 H3" fill="none" stroke="#1a2440" stroke-width="1.2"/><path d="M5 7.5 H12 M5 9.5 H12 M5 11.5 H12" stroke="#3a6ad0" stroke-width="1"/><path d="M0 2.5 H8 L9 4 L8 5.8 H0 Z" fill="url(#gr)"/></svg>
<div class="t" style="left:235.2px;top:361.00px;font-size:12px;color:#000;;transform:scaleX(0.9655);transform-origin:left center">Synchroniser T<u>V</u>A</div>
<svg style="left:344px;top:359.5px" width="15" height="15" viewBox="0 0 15 15"><defs><linearGradient id="gi" x1="0" y1="0" x2="0" y2="1"><stop offset="0" stop-color="#ffffff"/><stop offset="1" stop-color="#c4d4f4"/></linearGradient><linearGradient id="gr" x1="0" y1="0" x2="0" y2="1"><stop offset="0" stop-color="#ff8a70"/><stop offset="1" stop-color="#d02810"/></linearGradient></defs><path d="M3 0.5 H10.5 L13.5 3.5 V13.8 H3 Z" fill="url(#gi)" stroke="#4a5a7a" stroke-width="1"/><path d="M13.5 3.5 V13.8 H3" fill="none" stroke="#1a2440" stroke-width="1.2"/><path d="M5 7.5 H12 M5 9.5 H12 M5 11.5 H12" stroke="#3a6ad0" stroke-width="1"/><path d="M0 2.5 H8 L9 4 L8 5.8 H0 Z" fill="url(#gr)"/></svg>
<div class="t" style="left:366.4px;top:361.00px;font-size:12px;color:#000;;transform:scaleX(0.9869);transform-origin:left center">Affec<u>t</u>er solde</div>
<div style="left:11px;top:377px;width:1006px;height:1px;background:#fff"></div>
<div style="left:31px;top:378px;width:1px;height:169px;background:#6e6e6e"></div>
<svg style="left:17px;top:385px" width="7" height="4" viewBox="0 0 7 4"><path d="M0 0 H7 L3.5 4 Z" fill="#000"/></svg>
<div class="t" style="left:36.7px;top:382.00px;font-size:12px;color:#000;;transform:scaleX(0.9873);transform-origin:left center">N° d'écri...</div>
<div class="t" style="left:141.6px;top:382.00px;font-size:12px;color:#000;;transform:scaleX(0.9113);transform-origin:left center">Date</div>
<div class="t" style="left:206.8px;top:382.00px;font-size:12px;color:#000;;transform:scaleX(0.9791);transform-origin:left center">Compte général</div>
<div class="t" style="left:321.5px;top:382.00px;font-size:12px;color:#000;;transform:scaleX(0.9352);transform-origin:left center">Rôle tiers</div>
<div class="t" style="left:406.5px;top:382.00px;font-size:12px;color:#000;;transform:scaleX(0.9802);transform-origin:left center">Libellé écriture</div>
<div class="t" style="left:506.3px;top:382.00px;font-size:12px;color:#000;;transform:scaleX(0.9214);transform-origin:left center">Coe...</div>
<div class="t" style="left:568.6px;top:382.00px;font-size:12px;color:#000;;transform:scaleX(0.9379);transform-origin:left center">Débit TR</div>
<div class="t" style="left:671.2px;top:382.00px;font-size:12px;color:#000;;transform:scaleX(0.9584);transform-origin:left center">Crédit TR</div>
<div class="t" style="left:784.4px;top:382.00px;font-size:12px;color:#000;;transform:scaleX(0.9526);transform-origin:left center">Date échéance</div>
<div class="t" style="left:899.6px;top:382.00px;font-size:12px;color:#000;;transform:scaleX(0.9860);transform-origin:left center">Mode de règlement ...</div>
<svg style="left:97px;top:385px" width="14" height="7" viewBox="0 0 14 7"><path d="M0.5 6.5 H13.5 L7 0.5 Z" fill="none" stroke="#c0c0c0" stroke-width="1"/></svg>
<div style="left:32px;top:395px;width:985px;height:152px;background:#fff"></div>
<div style="left:32px;top:395px;width:985px;height:17px;background:#c0c0c0"></div>
<div style="left:193px;top:412px;width:112px;height:34px;background:#ffffd0"></div>
<div style="left:305px;top:412px;width:80px;height:34px;background:#c0c0c0"></div>
<div style="left:748px;top:412px;width:269px;height:34px;background:#c0c0c0"></div>
<div class="t" style="right:926px;top:399.00px;font-size:12px;color:#000;;transform:scaleX(0.9607);transform-origin:right center">2370</div>
<div class="t" style="left:122.2px;top:399.00px;font-size:12px;color:#000;;transform:scaleX(0.9607);transform-origin:left center">09/03/2020</div>
<div class="t" style="left:195px;top:399.00px;font-size:12px;color:#000;;transform:scaleX(0.9607);transform-origin:left center">40110000</div>
<div class="t" style="left:387.6px;top:399.00px;font-size:12px;color:#000;;transform:scaleX(0.8644);transform-origin:left center">ROUGE/VERT</div>
<div class="t" style="right:926px;top:416.00px;font-size:12px;color:#6d6d6d;;transform:scaleX(0.9607);transform-origin:right center">2371</div>
<div class="t" style="left:122.2px;top:416.00px;font-size:12px;color:#000;;transform:scaleX(0.9607);transform-origin:left center">09/03/2020</div>
<div class="t" style="left:195px;top:416.00px;font-size:12px;color:#000;;transform:scaleX(0.9607);transform-origin:left center">60110110</div>
<div class="t" style="left:387.6px;top:416.00px;font-size:12px;color:#000;;transform:scaleX(0.8644);transform-origin:left center">ROUGE/VERT</div>
<div class="t" style="right:926px;top:433.00px;font-size:12px;color:#6d6d6d;;transform:scaleX(0.9607);transform-origin:right center">2372</div>
<div class="t" style="left:122.2px;top:433.00px;font-size:12px;color:#000;;transform:scaleX(0.9607);transform-origin:left center">09/03/2020</div>
<div class="t" style="left:195px;top:433.00px;font-size:12px;color:#000;;transform:scaleX(0.9607);transform-origin:left center">44566110</div>
<div class="t" style="left:387.6px;top:433.00px;font-size:12px;color:#000;;transform:scaleX(0.8644);transform-origin:left center">ROUGE/VERT</div>
<div class="t" style="left:307.4px;top:399.00px;font-size:12px;color:#000;;transform:scaleX(0.8928);transform-origin:left center">VINF00084</div>
<div class="t" style="right:396.29999999999995px;top:399.00px;font-size:12px;color:#000;;transform:scaleX(0.9607);transform-origin:right center">0,00</div>
<div class="t" style="right:291.1px;top:399.00px;font-size:12px;color:#000;;transform:scaleX(0.9607);transform-origin:right center">1 440,00</div>
<div class="t" style="right:141.5px;top:399.00px;font-size:12px;color:#000;;transform:scaleX(0.9607);transform-origin:right center">09/03/2020</div>
<div class="t" style="left:900.7px;top:399.00px;font-size:12px;color:#000;;transform:scaleX(0.9607);transform-origin:left center">LCR</div>
<div class="t" style="right:396.29999999999995px;top:416.00px;font-size:12px;color:#000;;transform:scaleX(0.9607);transform-origin:right center">1 200,00</div>
<div class="t" style="right:291.1px;top:416.00px;font-size:12px;color:#000;;transform:scaleX(0.9607);transform-origin:right center">0,00</div>
<div class="t" style="right:396.29999999999995px;top:433.00px;font-size:12px;color:#000;;transform:scaleX(0.9607);transform-origin:right center">240,00</div>
<div class="t" style="right:291.1px;top:433.00px;font-size:12px;color:#000;;transform:scaleX(0.9607);transform-origin:right center">0,00</div>
<div style="left:518px;top:414px;width:9px;height:14px;background:linear-gradient(to right,#ffffff 0%,#c8c8c8 60%,#a8a8a8)"></div>
<svg style="left:514px;top:422px" width="10" height="3" viewBox="0 0 10 3"><rect x="1.2" y="0.8" width="1.4" height="1.4" fill="#000"/><rect x="3.4" y="0.8" width="1.4" height="1.4" fill="#000"/><rect x="5.6" y="0.8" width="1.4" height="1.4" fill="#000"/></svg>
<div style="left:32px;top:547px;width:985px;height:14px;background:#f0f0f0"></div>
<div style="left:32px;top:561px;width:985px;height:1px;background:#a0a0a0"></div>
<div style="left:33px;top:548px;width:13px;height:12px;background:linear-gradient(to bottom,#ffffff,#c8c8c8)"></div>
<svg style="left:36px;top:550px" width="8" height="8" viewBox="0 0 8 8"><path d="M0.5 4 H7 M3.75 0.8 V7.2" stroke="#000" stroke-width="1.1"/></svg>
<div style="left:46px;top:548px;width:14px;height:12px;background:linear-gradient(to bottom,#ffffff,#c8c8c8)"></div>
<svg style="left:51px;top:550px" width="5" height="8" viewBox="0 0 5 8"><path d="M4.5 0 V8 L0.5 4 Z" fill="#000"/></svg>
<div style="left:60px;top:548px;width:101px;height:12px;background:linear-gradient(to bottom,#ffffff 0%,#f6f6f6 50%,#d2d2d2 100%);border-radius:5px"></div>
<svg style="left:109px;top:551px" width="7" height="7" viewBox="0 0 7 7"><path d="M0.5 0 V7 M3.5 0 V7 M6.5 0 V7" stroke="#7a7a7a" stroke-width="1"/></svg>
<div style="left:1003px;top:548px;width:14px;height:12px;background:linear-gradient(to bottom,#ffffff,#c8c8c8)"></div>
<svg style="left:1007px;top:549.5px" width="5" height="8" viewBox="0 0 5 8"><path d="M0.5 0 V8 L4.5 4 Z" fill="#000"/></svg>
<div style="left:8px;top:565px;width:1013px;height:1px;background:#a0a0a0"></div>
<div style="left:8px;top:566px;width:1013px;height:1px;background:#fff"></div>
<div class="t" style="left:15.5px;top:568.00px;font-size:11.2px;color:#000;;transform:scaleX(0.9978);transform-origin:left center">Libellés</div>
<div style="left:57px;top:573px;width:152px;height:1px;background:#a0a0a0"></div>
<div style="left:57px;top:574px;width:152px;height:1px;background:#fff"></div>
<div class="t" style="left:17.5px;top:586.00px;font-size:12px;color:#000;;transform:scaleX(0.8655);transform-origin:left center">Compte général</div>
<div style="left:98px;top:581px;width:102px;height:21px;border-top:1px solid #a0a0a0;border-left:1px solid #a0a0a0;border-bottom:1px solid #fff;border-right:1px solid #fff;overflow:hidden"></div>
<div style="left:99px;top:582px;width:99px;height:19px;overflow:hidden"><div class="t" style="left:1.3px;top:2.00px;font-size:11.1px;color:#6d6d6d;transform:scaleX(1.018);transform-origin:left center">Fournisseurs - Achats</div></div>
<div class="t" style="left:17.5px;top:610.00px;font-size:12px;color:#000;;transform:scaleX(0.8750);transform-origin:left center">Compte tiers</div>
<div style="left:98px;top:605px;width:102px;height:21px;border-top:1px solid #a0a0a0;border-left:1px solid #a0a0a0;border-bottom:1px solid #fff;border-right:1px solid #fff"></div>
<div class="t" style="left:100.3px;top:608.00px;font-size:11.1px;color:#6d6d6d;;transform:scaleX(0.8941);transform-origin:left center">VINFLEURS</div>
<div class="t" style="left:229.3px;top:612.00px;font-size:12px;color:#000;;transform:scaleX(0.8844);transform-origin:left center">Base HT origine</div>
<div style="left:310px;top:607px;width:122px;height:20px;border-top:1px solid #a0a0a0;border-left:1px solid #a0a0a0;border-bottom:1px solid #fff;border-right:1px solid #fff"></div>
<div style="left:314px;top:609.5px;width:16px;height:15px;border:1px solid #cacaca;border-radius:2px;background:linear-gradient(to bottom,#f0f0f0,#c4c4c4)"></div>
<svg style="left:317px;top:612.5px" width="10" height="10" viewBox="0 0 10 10"><path d="M8.3 1.6 A4 4 0 1 0 8.3 8.4" fill="none" stroke="#555" stroke-width="1.3"/><path d="M1 4.2 H6 M1 6 H6" stroke="#555" stroke-width="0.9"/></svg>
<div class="t" style="right:599px;top:610.00px;font-size:10.8px;color:#6d6d6d;">0,00</div>
<div class="t" style="left:606.2px;top:567.00px;font-size:11.7px;color:#000;;transform:scaleX(1.0056);transform-origin:left center">Cumuls de la pièce sélectionnée</div>
<div style="left:778px;top:573px;width:242px;height:1px;background:#a0a0a0"></div>
<div style="left:778px;top:574px;width:242px;height:1px;background:#fff"></div>
<div class="t" style="left:805.4px;top:575.00px;font-size:10.6px;color:#000;">Débit</div>
<div class="t" style="left:909.1px;top:575.00px;font-size:10.6px;color:#000;">Crédit</div>
<div class="t" style="left:977.4px;top:575.00px;font-size:10.6px;color:#000;">Devise</div>
<div class="t" style="left:608px;top:594.00px;font-size:12px;color:#000;;transform:scaleX(0.8944);transform-origin:left center">Montants en tenue de compte</div>
<div class="t" style="left:608px;top:615.00px;font-size:12px;color:#000;;transform:scaleX(0.8750);transform-origin:left center">Montants en transaction</div>
<div style="left:762px;top:588px;width:107px;height:20px;border-top:1px solid #a0a0a0;border-left:1px solid #a0a0a0;border-bottom:1px solid #fff;border-right:1px solid #fff"></div>
<div style="left:869px;top:588px;width:107px;height:20px;border-top:1px solid #a0a0a0;border-left:1px solid #a0a0a0;border-bottom:1px solid #fff;border-right:1px solid #fff"></div>
<div style="left:976px;top:588px;width:38px;height:20px;border-top:1px solid #a0a0a0;border-left:1px solid #a0a0a0;border-bottom:1px solid #fff;border-right:1px solid #fff"></div>
<div style="left:765.5px;top:590.5px;width:16px;height:15px;border:1px solid #cacaca;border-radius:2px;background:linear-gradient(to bottom,#f0f0f0,#c4c4c4)"></div>
<div style="left:872.5px;top:590.5px;width:16px;height:15px;border:1px solid #cacaca;border-radius:2px;background:linear-gradient(to bottom,#f0f0f0,#c4c4c4)"></div>
<div class="t" style="right:162px;top:591.00px;font-size:10.6px;color:#6d6d6d;">1 440,00</div>
<div class="t" style="right:55px;top:591.00px;font-size:10.6px;color:#6d6d6d;">1 440,00</div>
<div class="t" style="left:978.2px;top:591.00px;font-size:10.6px;color:#6d6d6d;">EUR</div>
<div style="left:762px;top:609px;width:107px;height:20px;border-top:1px solid #a0a0a0;border-left:1px solid #a0a0a0;border-bottom:1px solid #fff;border-right:1px solid #fff"></div>
<div style="left:869px;top:609px;width:107px;height:20px;border-top:1px solid #a0a0a0;border-left:1px solid #a0a0a0;border-bottom:1px solid #fff;border-right:1px solid #fff"></div>
<div style="left:976px;top:609px;width:38px;height:20px;border-top:1px solid #a0a0a0;border-left:1px solid #a0a0a0;border-bottom:1px solid #fff;border-right:1px solid #fff"></div>
<div style="left:765.5px;top:611.5px;width:16px;height:15px;border:1px solid #cacaca;border-radius:2px;background:linear-gradient(to bottom,#f0f0f0,#c4c4c4)"></div>
<svg style="left:768.5px;top:614.5px" width="10" height="10" viewBox="0 0 10 10"><path d="M8.3 1.6 A4 4 0 1 0 8.3 8.4" fill="none" stroke="#555" stroke-width="1.3"/><path d="M1 4.2 H6 M1 6 H6" stroke="#555" stroke-width="0.9"/></svg>
<div style="left:872.5px;top:611.5px;width:16px;height:15px;border:1px solid #cacaca;border-radius:2px;background:linear-gradient(to bottom,#f0f0f0,#c4c4c4)"></div>
<svg style="left:875.5px;top:614.5px" width="10" height="10" viewBox="0 0 10 10"><path d="M8.3 1.6 A4 4 0 1 0 8.3 8.4" fill="none" stroke="#555" stroke-width="1.3"/><path d="M1 4.2 H6 M1 6 H6" stroke="#555" stroke-width="0.9"/></svg>
<div class="t" style="right:162px;top:612.00px;font-size:10.6px;color:#6d6d6d;">1 440,00</div>
<div class="t" style="right:55px;top:612.00px;font-size:10.6px;color:#6d6d6d;">1 440,00</div>
<div class="t" style="left:978.2px;top:612.00px;font-size:10.6px;color:#6d6d6d;">EUR</div>
<div style="left:8px;top:641px;width:1013px;height:1px;background:#fff"></div>
<div style="left:9px;top:643px;width:80px;height:18px;border-top:1px solid #a0a0a0;border-left:1px solid #a0a0a0"></div>
<div style="left:88px;top:643px;width:829px;height:18px;border-top:1px solid #a0a0a0;border-left:1px solid #a0a0a0"></div>
<div style="left:916px;top:643px;width:105px;height:18px;border-top:1px solid #a0a0a0;border-left:1px solid #a0a0a0"></div>
<svg style="left:1006px;top:649px" width="11" height="11" viewBox="0 0 11 11"><rect x="8" y="0" width="2" height="2" fill="#9a9a9a"/><rect x="4" y="4" width="2" height="2" fill="#9a9a9a"/><rect x="8" y="4" width="2" height="2" fill="#9a9a9a"/><rect x="0" y="8" width="2" height="2" fill="#9a9a9a"/><rect x="4" y="8" width="2" height="2" fill="#9a9a9a"/><rect x="8" y="8" width="2" height="2" fill="#9a9a9a"/></svg>
</body></html>
